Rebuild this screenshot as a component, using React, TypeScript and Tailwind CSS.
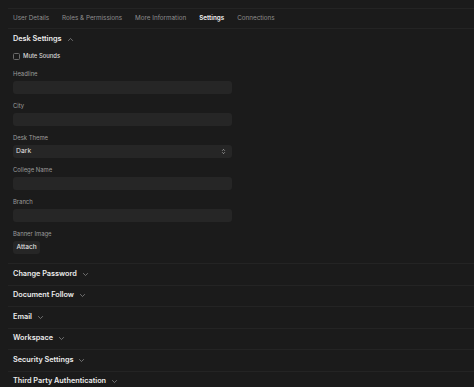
import React from 'react';

const tabs = ['User Details', 'Roles & Permissions', 'More Information', 'Settings', 'Connections'];
const fields = ['Headline', 'City', 'Desk Theme', 'College Name', 'Branch', 'Banner Image'];
const sections = ['Change Password', 'Document Follow', 'Email', 'Workspace', 'Security Settings', 'Third Party Authentication'];

const Chevron: React.FC<{ up?: boolean }> = ({ up }) => (
  <svg width="7" height="7" viewBox="0 0 10 10" className="ml-[5px] text-[#8a8a8a]">
    <path d={up ? 'M2 6.5 L5 3.5 L8 6.5' : 'M2 3.5 L5 6.5 L8 3.5'} fill="none" stroke="currentColor" strokeWidth="1.1" strokeLinecap="round" strokeLinejoin="round" />
  </svg>
);

const Field: React.FC<{ label: string }> = ({ label }) => {
  let control: React.ReactNode = <div className="h-[13px] w-[219px] rounded-[3px] bg-[#262626]" />;
  if (label === 'Desk Theme') {
    control = (
      <div className="h-[13px] w-[219px] rounded-[3px] bg-[#262626] flex items-center justify-between pl-[3px] pr-[6px]">
        <span className="text-[6.8px] text-[#e2e2e2]">Dark</span>
        <svg width="5" height="7" viewBox="0 0 6 8" className="text-[#bbbbbb]">
          <path d="M1.5 3 L3 1.5 L4.5 3 M1.5 5 L3 6.5 L4.5 5" fill="none" stroke="currentColor" strokeWidth="0.9" />
        </svg>
      </div>
    );
  }
  if (label === 'Banner Image') {
    control = (
      <div className="h-[13px] w-[27px] rounded-[3px] bg-[#262626] flex items-center justify-center text-[6.5px] font-medium text-[#e2e2e2]">
        Attach
      </div>
    );
  }
  return (
    <div className="flex flex-col">
      <div className="h-[8px] leading-[8px] text-[5.9px] text-[#9c9c9c] mb-[3px]">{label}</div>
      {control}
    </div>
  );
};

export default function App() {
  return (
    <div className="w-[474px] h-[387px] overflow-hidden bg-[#1b1b1b] pt-[8px]" style={{ fontFamily: 'Inter, "Noto Sans", sans-serif' }}>
      <div className="ml-[8px] border-t border-[#242424]">
        {/* Tabs */}
        <div className="h-[20px] flex items-center gap-[13px] pl-[5px] border-b border-[#242424]">
          {tabs.map((t) => (
            <span key={t} className={t === 'Settings' ? 'text-[6.3px] font-semibold text-[#f0f0f0]' : 'text-[6.3px] text-[#8f8f8f]'}>
              {t}
            </span>
          ))}
        </div>

        {/* Desk Settings */}
        <div className="pl-[5px] pb-[9px]">
          <div className="h-[20px] flex items-center text-[7.3px] font-semibold text-[#ececec]">
            Desk Settings
            <Chevron up />
          </div>
          <div className="mt-[3px] h-[8px] flex items-center gap-[3px]">
            <div className="w-[7px] h-[7px] rounded-[1.5px] border border-[#6a6a6a]" />
            <span className="text-[5.9px] font-medium text-[#d8d8d8]">Mute Sounds</span>
          </div>
          <div className="mt-[10px] flex flex-col gap-[8px]">
            {fields.map((f) => (
              <Field key={f} label={f} />
            ))}
          </div>
        </div>

        {/* Collapsed sections */}
        {sections.map((s) => (
          <div key={s} className="h-[21.5px] border-t border-[#242424] flex items-center pl-[5px] text-[7.3px] font-semibold text-[#ececec]">
            {s}
            <Chevron />
          </div>
        ))}
      </div>
    </div>
  );
}
